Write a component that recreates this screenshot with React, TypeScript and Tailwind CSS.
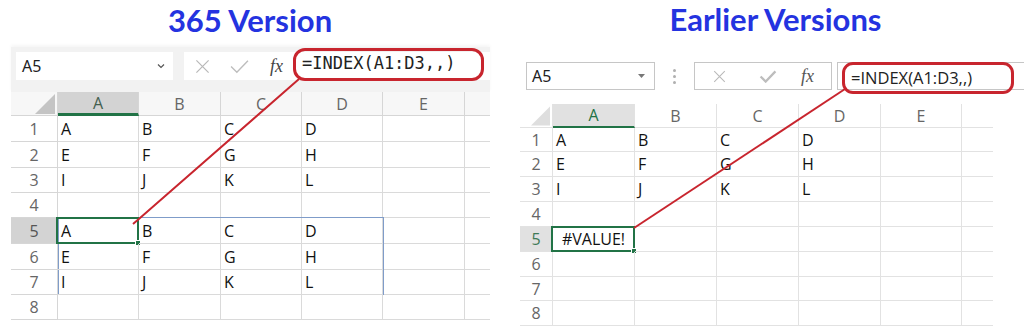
import React from 'react';

const LETTERS = [
  ['A', 'B', 'C', 'D'],
  ['E', 'F', 'G', 'H'],
  ['I', 'J', 'K', 'L'],
];
const COLS = ['A', 'B', 'C', 'D', 'E'];
const EMPTY = ['', '', '', ''];

const NEW_ROWS = [...LETTERS, EMPTY, ...LETTERS, EMPTY];
const OLD_ROWS = [...LETTERS, EMPTY, EMPTY, EMPTY, EMPTY, EMPTY];

function XIcon({ size }: { size: number }) {
  return (
    <svg width={size} height={size} viewBox="0 0 16 16" fill="none">
      <path d="M1.5 1.5 L14.5 14.5 M14.5 1.5 L1.5 14.5" stroke="#b9b9b9" strokeWidth="1.3" />
    </svg>
  );
}

function CheckIcon({ w, h, bold }: { w: number; h: number; bold?: boolean }) {
  return (
    <svg width={w} height={h} viewBox="0 0 18 14" fill="none">
      <path d="M1 7 L6.5 12.5 L17 1.5" stroke="#bdbdbd" strokeWidth={bold ? 2.4 : 1.3} />
    </svg>
  );
}

function Corner({ light }: { light?: boolean }) {
  return (
    <div className="flex h-full items-end justify-end pb-[1px] pr-[2px]">
      <svg width={light ? 19 : 20} height={20} viewBox="0 0 20 20">
        <polygon points="20,0 20,20 0,20" fill={light ? '#dedede' : '#c4c4c4'} />
      </svg>
    </div>
  );
}

type SheetProps = {
  gridClass: string;
  rows: string[][];
  old?: boolean;
};

function Sheet({ gridClass, rows, old }: SheetProps) {
  const cells: React.ReactNode[] = [];

  // header row
  cells.push(
    <div key="corner" className={`border-b border-r ${old ? 'border-[#e2e2e2] bg-white' : 'border-[#d6d6d6] bg-[#f7f7f7]'}`}>
      <Corner light={old} />
    </div>
  );
  COLS.forEach((col, i) => {
    const sel = i === 0;
    cells.push(
      <div
        key={`h${col}`}
        className={`flex items-center justify-center border-r text-[16px] ${
          sel
            ? old
              ? 'border-b-2 border-b-[#217346] border-r-[#e2e2e2] bg-[#e1e1e1] text-[#217346]'
              : 'border-b-[3px] border-b-[#217346] border-r-[#d6d6d6] bg-[#d3d3d3] text-[#44604f]'
            : old
              ? 'border-b border-[#e2e2e2] bg-white text-[#666]'
              : 'border-b border-[#d6d6d6] bg-[#f7f7f7] text-[#666]'
        }`}
      >
        {col}
      </div>
    );
  });
  cells.push(
    <div key="hx" className={`border-b ${old ? 'border-[#e2e2e2] bg-white' : 'border-[#d6d6d6] bg-[#f7f7f7]'}`} />
  );

  rows.forEach((row, r) => {
    const n = r + 1;
    const selRow = n === 5;
    cells.push(
      <div
        key={`r${n}`}
        className={`flex items-center justify-center border-b border-r text-[16px] ${
          selRow
            ? old
              ? 'border-[#e2e2e2] bg-[#e1e1e1] text-[#3f7a57]'
              : 'border-[#d6d6d6] bg-[#d3d3d3] text-[#555]'
            : old
              ? 'border-[#e2e2e2] bg-white text-[#666]'
              : 'border-[#d6d6d6] bg-white text-[#666]'
        }`}
      >
        {n}
      </div>
    );
    row.forEach((v, c) => {
      const isA5 = selRow && c === 0;
      cells.push(
        <div
          key={`c${n}${c}`}
          className={`relative flex items-center border-b border-r pl-[3px] text-[16px] text-[#111] ${
            old ? 'border-[#e2e2e2]' : 'border-[#dadada]'
          }`}
        >
          {isA5 && old ? (
            <span className="w-full pr-[3px] text-center">#VALUE!</span>
          ) : (
            v
          )}
          {isA5 && !old && (
            <div className="absolute left-0 top-[-1px] h-[78px] w-[326px] border border-[#7f9cc9]" />
          )}
          {isA5 && (
            <div className="absolute left-[-2px] top-[-1px] bottom-[-1px] right-[-1px] border-2 border-[#217346]">
              <div className="absolute bottom-[-4px] right-[-4px] h-[6px] w-[6px] border border-white bg-[#217346]" />
            </div>
          )}
        </div>
      );
    });
    cells.push(
      <div key={`e${n}`} className={`border-b border-r ${old ? 'border-[#e2e2e2]' : 'border-[#dadada]'}`} />
    );
    cells.push(
      <div key={`x${n}`} className={`border-b ${old ? 'border-[#e2e2e2]' : 'border-[#dadada]'}`} />
    );
  });

  return <div className={`grid ${gridClass}`}>{cells}</div>;
}

function NewVersion() {
  return (
    <div className="w-[512px] shrink-0">
      <div className="flex h-[47px] items-start justify-center pt-[1px]">
        <h1 className="ml-[-12px] text-[31px] font-bold leading-[38px] text-[#2433e0] [font-family:Lato,'Noto_Sans',sans-serif]">
          365 Version
        </h1>
      </div>
      <div className="ml-[11px] w-[479px]">
        <div className="flex h-[45px] items-start gap-[11px] bg-[#f2f2f2] pl-[5px] pt-[5px] shadow-[0_-2px_3px_rgba(0,0,0,0.04)]">
          <div className="flex h-[28px] w-[157px] items-center justify-between bg-white pl-[6px] pr-[8px] text-[16px] text-[#222]">
            <span>A5</span>
            <svg width="8" height="6" viewBox="0 0 8 6" fill="none">
              <path d="M1 1.5 L4 4.5 L7 1.5" stroke="#555" strokeWidth="1.2" />
            </svg>
          </div>
          <div className="flex h-[28px] flex-1 items-center bg-white">
            <div className="ml-[11px] flex items-center">
              <XIcon size={15} />
            </div>
            <div className="ml-[20px] flex items-center">
              <CheckIcon w={19} h={15} />
            </div>
            <span className="ml-[21px] text-[18px] italic text-[#444] [font-family:'Liberation_Serif',serif]">fx</span>
            <div className="ml-[10px] mt-[-4px] flex h-[33px] w-[191px] items-center rounded-[12px] border-[3px] border-[#c8252e] pl-[6px] text-[17px] text-[#222] [font-family:'DejaVu_Sans_Mono',monospace]">
              =INDEX(A1:D3,,)
            </div>
          </div>
        </div>
        <Sheet
          gridClass="grid-cols-[47px_81px_82px_81px_81px_82px_25px] grid-rows-[24px_26px_26px_25px_25px_26px_26px_25px_25px] [font-family:'Open_Sans',sans-serif]"
          rows={NEW_ROWS}
        />
      </div>
    </div>
  );
}

function EarlierVersions() {
  return (
    <div className="w-[512px] shrink-0">
      <div className="flex h-[62px] items-start justify-center pt-[1px]">
        <h1 className="ml-[15px] text-[31px] font-bold leading-[36px] text-[#2433e0] [font-family:Lato,'Noto_Sans',sans-serif]">
          Earlier Versions
        </h1>
      </div>
      <div className="flex h-[42px] items-start pl-[14px]">
        <div className="flex h-[28px] w-[129px] items-center justify-between border border-[#c6c6c6] bg-white pl-[5px] pr-[9px] text-[16px] text-[#222]">
          <span>A5</span>
          <svg width="7" height="4" viewBox="0 0 7 4">
            <polygon points="0,0 7,0 3.5,4" fill="#777" />
          </svg>
        </div>
        <div className="flex h-[28px] w-[39px] flex-col items-center justify-center gap-[3px]">
          <span className="h-[3px] w-[3px] rounded-full bg-[#b0b0b0]" />
          <span className="h-[3px] w-[3px] rounded-full bg-[#b0b0b0]" />
          <span className="h-[3px] w-[3px] rounded-full bg-[#b0b0b0]" />
        </div>
        <div className="flex h-[28px] w-[138px] items-center border border-[#c6c6c6] bg-white">
          <div className="ml-[18px] flex items-center">
            <XIcon size={13} />
          </div>
          <div className="ml-[33px] flex items-center">
            <CheckIcon w={18} h={13} bold />
          </div>
          <span className="ml-[24px] text-[18px] italic text-[#555] [font-family:'Liberation_Serif',serif]">fx</span>
        </div>
        <div className="ml-[5px] flex h-[28px] flex-1 items-start border-y border-l border-[#c6c6c6] bg-white">
          <div className="ml-[4px] mt-[-1px] flex h-[32px] w-[172px] items-center rounded-[11px] border-[3px] border-[#c8252e] pl-[6px] text-[16.5px] text-[#222] [font-family:'Open_Sans',sans-serif]">
            =INDEX(A1:D3,,)
          </div>
        </div>
      </div>
      <div className="ml-[8px] w-[473px]">
        <Sheet
          gridClass="grid-cols-[33px_82px_82px_82px_82px_81px_31px] grid-rows-[24px_24px_25px_25px_25px_25px_25px_24px_25px] [font-family:'Open_Sans',sans-serif]"
          rows={OLD_ROWS}
          old
        />
      </div>
    </div>
  );
}

export default function App() {
  return (
    <div className="relative h-[331px] w-[1024px] overflow-hidden bg-white">
      <div className="flex">
        <NewVersion />
        <EarlierVersions />
      </div>
      {/* callout lines from the formula to the result cell */}
      <svg className="pointer-events-none absolute inset-0" width="1024" height="331" viewBox="0 0 1024 331">
        <path d="M133 224 L140 218 L299 79" stroke="#c8252e" strokeWidth="2" fill="none" />
        <path d="M634 228 L845 89" stroke="#c8252e" strokeWidth="2" fill="none" />
      </svg>
    </div>
  );
}
